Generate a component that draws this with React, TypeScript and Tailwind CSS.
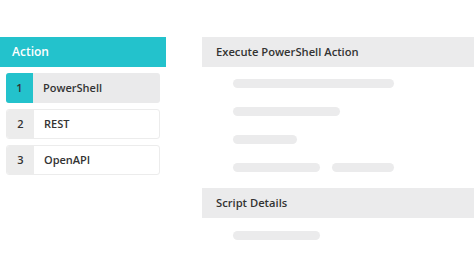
import React from 'react'

const STEPS = [
  { n: '1', label: 'PowerShell', active: true },
  { n: '2', label: 'REST', active: false },
  { n: '3', label: 'OpenAPI', active: false },
]

function Bar({ w }: { w: string }) {
  return <div className={`h-[9px] rounded-full bg-[#ebebec] ${w}`} />
}

export default function App() {
  return (
    <div
      className="w-[474px] h-[266px] bg-white flex pt-[37px] text-[#333]"
      style={{ fontFamily: '"Open Sans", "Liberation Sans", sans-serif' }}
    >
      <div className="w-[166px] flex flex-col">
        <div className="h-[30px] bg-[#23c2cc] flex items-center pl-[12px] text-white text-[12px] font-semibold">
          Action
        </div>
        <div className="flex flex-col gap-[6px] pl-[6px] pr-[6px] pt-[6px]">
          {STEPS.map((s) => (
            <div
              key={s.n}
              className={`h-[30px] flex rounded-[3px] overflow-hidden ${
                s.active ? 'bg-[#eaeaeb]' : 'bg-white border border-[#ececec]'
              }`}
            >
              <div
                className={`w-[27px] shrink-0 flex items-center justify-center text-[11px] font-semibold ${
                  s.active ? 'bg-[#23c2cc]' : 'bg-[#ececec]'
                }`}
              >
                {s.n}
              </div>
              <div className="flex items-center pl-[10px] text-[11px] font-semibold">
                {s.label}
              </div>
            </div>
          ))}
        </div>
      </div>

      <div className="flex-1 ml-[36px] flex flex-col">
        <div className="h-[30px] bg-[#ebebec] flex items-center pl-[14px] text-[11.2px] font-semibold">
          Execute PowerShell Action
        </div>
        <div className="flex flex-col gap-[19px] pl-[31px] pt-[12px]">
          <Bar w="w-[161px]" />
          <Bar w="w-[107px]" />
          <Bar w="w-[64px]" />
          <div className="flex gap-[12px]">
            <Bar w="w-[87px]" />
            <Bar w="w-[62px]" />
          </div>
        </div>
        <div className="mt-[16px] h-[30px] bg-[#ebebec] flex items-center pl-[14px] text-[11.2px] font-semibold">
          Script Details
        </div>
        <div className="pl-[31px] pt-[13px]">
          <Bar w="w-[87px]" />
        </div>
      </div>
    </div>
  )
}
